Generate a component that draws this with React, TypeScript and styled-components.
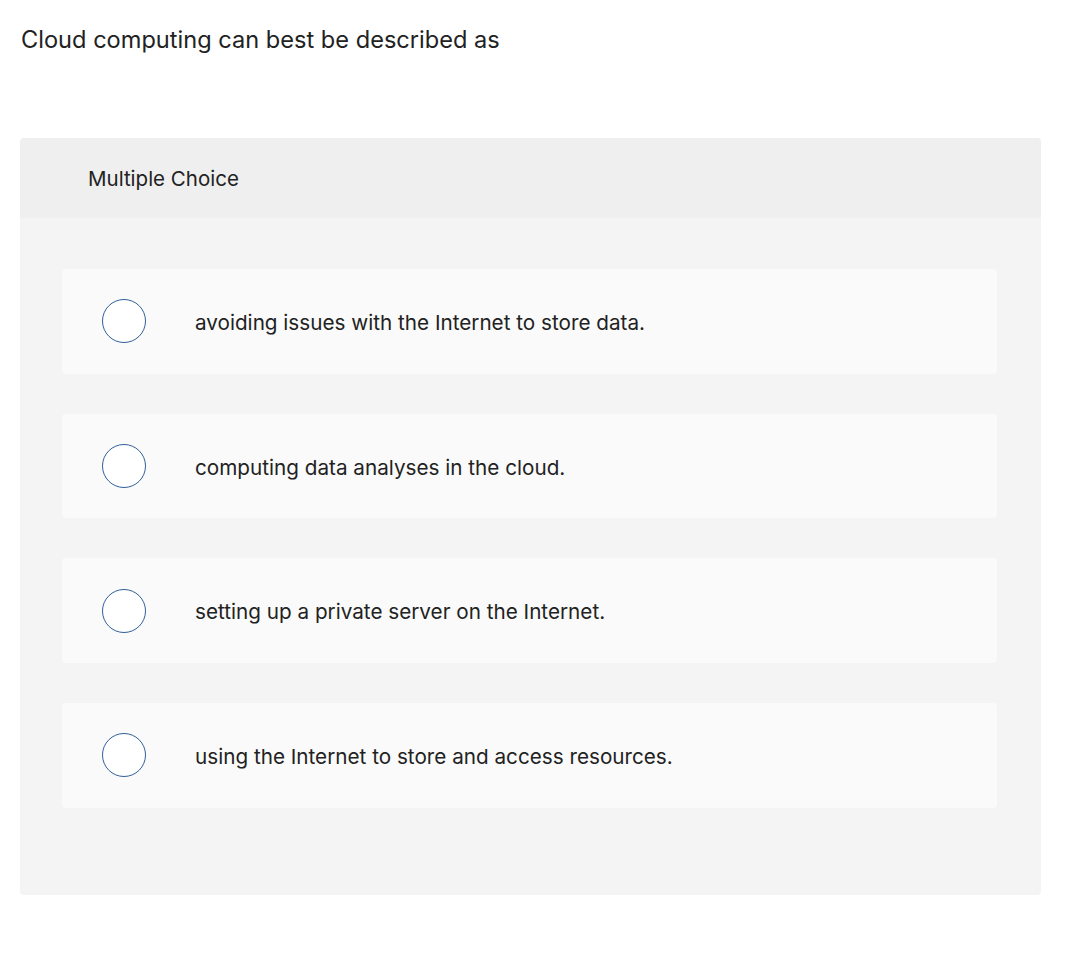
import React from "react";
import styled, { createGlobalStyle } from "styled-components";

const Global = createGlobalStyle`
  html, body { margin: 0; padding: 0; background: #ffffff; }
  body { font-family: "Inter", "Lato", "Noto Sans", sans-serif; color: #1f1f1f; }
`;

const Page = styled.div`
  padding: 25px 47px 0 20px;
  display: flex;
  flex-direction: column;
`;

const Question = styled.p`
  margin: 0 0 0 1px;
  font-size: 23.6px;
  line-height: 30px;
  color: #222222;
`;

const Card = styled.section`
  margin-top: 83px;
  border-radius: 4px;
  background: #f4f4f4;
  overflow: hidden;
  width: 1021px;
`;

const CardHeader = styled.div`
  height: 80px;
  background: #efefef;
  display: flex;
  align-items: center;
  padding-left: 68px;
  font-size: 20.5px;
  color: #222222;
`;

const Options = styled.div`
  padding: 51px 44px 87px 42px;
  display: flex;
  flex-direction: column;
  gap: 40px;
`;

const Option = styled.label`
  height: 104.7px;
  background: #fafafa;
  border-radius: 4px;
  display: flex;
  align-items: center;
  padding-left: 40px;
  cursor: pointer;
`;

const Radio = styled.span`
  width: 42px;
  height: 42px;
  border-radius: 50%;
  border: 1px solid #30609a;
  background: #ffffff;
  flex: none;
`;

const OptionText = styled.span`
  margin-left: 49px;
  margin-top: 2px;
  font-size: 20.7px;
  color: #222222;
`;

const choices = [
  "avoiding issues with the Internet to store data.",
  "computing data analyses in the cloud.",
  "setting up a private server on the Internet.",
  "using the Internet to store and access resources.",
];

export default function App() {
  return (
    <>
      <Global />
      <Page>
        <Question>Cloud computing can best be described as</Question>
        <Card>
          <CardHeader>Multiple Choice</CardHeader>
          <Options>
            {choices.map((c) => (
              <Option key={c}>
                <Radio />
                <OptionText>{c}</OptionText>
              </Option>
            ))}
          </Options>
        </Card>
      </Page>
    </>
  );
}
